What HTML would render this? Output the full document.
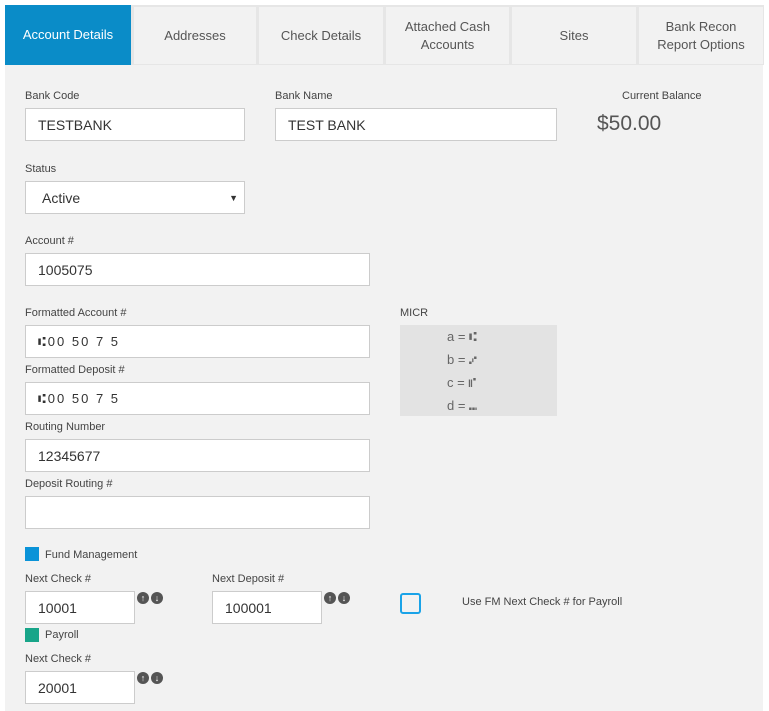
<!DOCTYPE html>
<html><head><meta charset="utf-8"><style>
body{margin:0;width:769px;height:711px;background:#fff;font-family:"Liberation Sans",sans-serif;position:relative;overflow:hidden;color:#444}
.a{position:absolute}
.tabbar{left:5px;top:5px;width:759px;height:60px;background:#e6e6e6}
.tab{position:absolute;top:7px;height:57px;background:#f2f2f2;color:#555;font-size:13px;display:flex;align-items:center;justify-content:center;text-align:center;line-height:18px}
.panel{left:5px;top:65px;width:758px;height:646px;background:#f2f2f2}
.lbl{position:absolute;font-size:11px;color:#444;margin-top:2px}
.in{position:absolute;background:#fff;border:1px solid #ccc;box-sizing:border-box;font-size:14px;color:#333;padding-left:12px;display:flex;align-items:center}
.arr{position:absolute;font-size:11px;color:#555}
.c{display:inline-block;width:12px;height:12px;border-radius:50%;background:#555;color:#fff;font-size:9px;line-height:12px;text-align:center;margin-right:2px;vertical-align:middle;font-weight:bold}
</style></head><body>
<div class="a tabbar"></div>
<div class="tab" style="left:5px;top:5px;width:126px;height:60px;background:#0a8cc8;color:#fff">Account Details</div>
<div class="tab" style="left:134px;width:122px">Addresses</div>
<div class="tab" style="left:259px;width:124px">Check Details</div>
<div class="tab" style="left:386px;width:123px">Attached Cash<br>Accounts</div>
<div class="tab" style="left:512px;width:124px">Sites</div>
<div class="tab" style="left:639px;width:124px">Bank Recon<br>Report Options</div>
<div class="a panel"></div>
<div class="lbl" style="left:25px;top:88px">Bank Code</div>
<div class="in" style="left:25px;top:108px;width:220px;height:33px">TESTBANK</div>
<div class="lbl" style="left:275px;top:88px">Bank Name</div>
<div class="in" style="left:275px;top:108px;width:282px;height:33px">TEST BANK</div>
<div class="lbl" style="left:622px;top:88px">Current Balance</div>
<div class="a" style="left:597px;top:112px;font-size:21px;color:#555">$50.00</div>
<div class="lbl" style="left:25px;top:161px">Status</div>
<div class="in" style="left:25px;top:181px;width:220px;height:33px;padding-left:16px">Active<span style="position:absolute;right:6px;font-size:9px">▼</span></div>
<div class="lbl" style="left:25px;top:233px">Account #</div>
<div class="in" style="left:25px;top:253px;width:345px;height:33px">1005075</div>
<div class="lbl" style="left:25px;top:305px">Formatted Account #</div>
<div class="in" style="left:25px;top:325px;width:345px;height:33px;letter-spacing:2px;font-size:13px">⑆00 50 7 5</div>
<div class="lbl" style="left:25px;top:362px">Formatted Deposit #</div>
<div class="in" style="left:25px;top:382px;width:345px;height:33px;letter-spacing:2px;font-size:13px">⑆00 50 7 5</div>
<div class="lbl" style="left:25px;top:419px">Routing Number</div>
<div class="in" style="left:25px;top:439px;width:345px;height:33px">12345677</div>
<div class="lbl" style="left:25px;top:476px">Deposit Routing #</div>
<div class="in" style="left:25px;top:496px;width:345px;height:33px"></div>
<div class="lbl" style="left:400px;top:305px">MICR</div>
<div class="a" style="left:400px;top:325px;width:157px;height:91px;background:#e3e3e3;color:#666;font-size:13px;line-height:23px;padding-left:47px;box-sizing:border-box">a = ⑆<br>b = ⑇<br>c = ⑈<br>d = ⑉</div>
<div class="a" style="left:25px;top:547px;width:14px;height:14px;background:#0a93d8"></div>
<div class="lbl" style="left:45px;top:547px">Fund Management</div>
<div class="lbl" style="left:25px;top:571px">Next Check #</div>
<div class="in" style="left:25px;top:591px;width:110px;height:33px">10001</div>
<div class="arr" style="left:137px;top:592px"><span class="c">↑</span><span class="c">↓</span></div>
<div class="lbl" style="left:212px;top:571px">Next Deposit #</div>
<div class="in" style="left:212px;top:591px;width:110px;height:33px">100001</div>
<div class="arr" style="left:324px;top:592px"><span class="c">↑</span><span class="c">↓</span></div>
<div class="a" style="left:400px;top:593px;width:17px;height:17px;border:2px solid #1aa3e8;border-radius:3px;background:#f2f2f2"></div>
<div class="lbl" style="left:462px;top:594px">Use FM Next Check # for Payroll</div>
<div class="a" style="left:25px;top:628px;width:14px;height:14px;background:#18a589"></div>
<div class="lbl" style="left:45px;top:627px">Payroll</div>
<div class="lbl" style="left:25px;top:651px">Next Check #</div>
<div class="in" style="left:25px;top:671px;width:110px;height:33px">20001</div>
<div class="arr" style="left:137px;top:672px"><span class="c">↑</span><span class="c">↓</span></div>
</body></html>
